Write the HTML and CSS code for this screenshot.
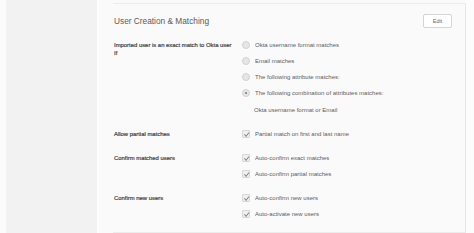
FILE: index.html
```html
<!DOCTYPE html>
<html lang="en">
<head>
  <meta charset="UTF-8">
  <title>User Creation &amp; Matching</title>
  <link rel="stylesheet" href="styles.css">
</head>
<body>
  <div class="page">
    <aside class="sidebar"></aside>

    <main class="main">
      <section class="settings">
        <div class="settings-head">
          <h2>User Creation &amp; Matching</h2>
          <button class="edit-button">Edit</button>
        </div>

        <div class="field first">
          <div class="field-label">Imported user is an exact match to Okta user If</div>
          <div class="options">
            <div class="option"><span class="radio"></span>Okta username format matches</div>
            <div class="option"><span class="radio"></span>Email matches</div>
            <div class="option"><span class="radio"></span>The following attribute matches:</div>
            <div class="option"><span class="radio checked"></span>The following combination of attributes matches:</div>
            <div class="option sub">Okta username format or Email</div>
          </div>
        </div>

        <div class="field">
          <div class="field-label">Allow partial matches</div>
          <div class="options">
            <div class="option"><span class="checkbox"></span>Partial match on first and last name</div>
          </div>
        </div>

        <div class="field">
          <div class="field-label">Confirm matched users</div>
          <div class="options">
            <div class="option"><span class="checkbox"></span>Auto-confirm exact matches</div>
            <div class="option"><span class="checkbox"></span>Auto-confirm partial matches</div>
          </div>
        </div>

        <div class="field">
          <div class="field-label">Confirm new users</div>
          <div class="options">
            <div class="option"><span class="checkbox"></span>Auto-confirm new users</div>
            <div class="option"><span class="checkbox"></span>Auto-activate new users</div>
          </div>
        </div>
      </section>
    </main>
  </div>
</body>
</html>
```

FILE: styles.css
```css
body {
  margin: 0;
  font-family: 'Liberation Sans', Arial, sans-serif;
  background: #fcfcfc;
  color: #444;
}

.page {
  display: flex;
  height: 233px;
}

/* Left nav column (empty in the shot) */
.sidebar {
  width: 91px;
  margin-left: 6px;
  background: #f2f2f2;
  border-right: 2px solid #fdfdfd;
}

.main {
  width: 353px;
  padding-left: 14px;
  background: #fafafa;
}

.settings {
  margin-top: 3px;
  padding: 0 0 10px 1px;
  border-top: 1px solid #ececec;
  border-right: 1px solid #e6e6e6;
  border-bottom: 1px solid #ececec;
}

.settings-head {
  display: flex;
  justify-content: space-between;
  align-items: center;
  padding-top: 10px;
  margin-bottom: 9px;
}

.settings-head h2 {
  margin: 0;
  font-size: 8.3px;
  font-weight: normal;
  color: #5a5a5a;
}

.edit-button {
  width: 29px;
  height: 14px;
  margin-right: 13px;
  padding: 0;
  font-family: inherit;
  font-size: 5.5px;
  color: #666;
  background: #fff;
  border: 1px solid #d4d4d4;
  border-radius: 2px;
}

.field {
  display: flex;
  margin-top: 8px;
}

.field.first {
  margin-top: 0;
}

.field-label {
  width: 121px;
  margin-right: 7px;
  padding-top: 4px;
  font-size: 5.9px;
  line-height: 8px;
  color: #3e3e3e;
  -webkit-text-stroke: 0.2px #3e3e3e;
}

.options {
  flex: 1;
}

.option {
  display: flex;
  align-items: center;
  height: 16px;
  font-size: 6px;
  color: #5c5c5c;
}

.option.sub {
  margin-top: 1px;
  padding-left: 12px;
}

.radio {
  width: 6px;
  height: 6px;
  margin-right: 5px;
  border: 1px solid #d2d2d2;
  border-radius: 50%;
  background: #e6e6e6;
  position: relative;
}

.radio.checked::after {
  content: '';
  position: absolute;
  left: 2px;
  top: 2px;
  width: 2px;
  height: 2px;
  border-radius: 50%;
  background: #777;
}

.checkbox {
  width: 6px;
  height: 6px;
  margin-right: 5px;
  border: 1px solid #d6d6d6;
  border-radius: 1px;
  background: #f0f0f0;
  position: relative;
}

.checkbox::after {
  content: '';
  position: absolute;
  left: 1px;
  top: 0;
  width: 4px;
  height: 2px;
  border-left: 1px solid #8a8a8a;
  border-bottom: 1px solid #8a8a8a;
  transform: rotate(-50deg) translate(-1px, 1px);
}
```
